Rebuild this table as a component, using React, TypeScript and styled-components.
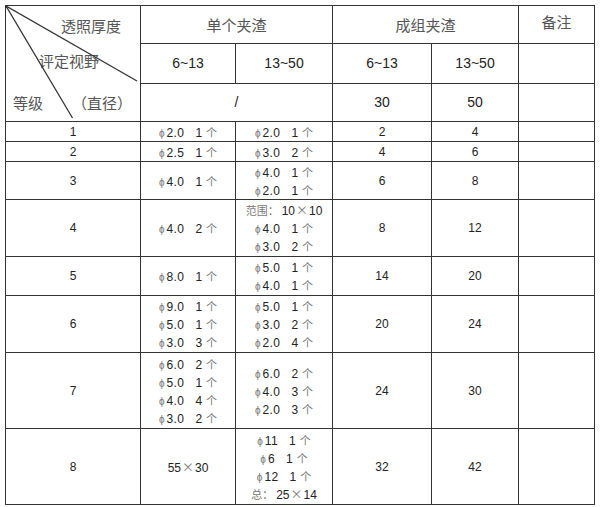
import React from "react";
import styled, { createGlobalStyle } from "styled-components";

const Global = createGlobalStyle`
  html, body { margin: 0; padding: 0; background: #fff; }
  body { font-family: "Liberation Sans", Arial, "Noto Sans CJK SC", sans-serif; }
`;

const Page = styled.div`
  padding: 5px 0 0 5px;
`;

const Table = styled.table`
  border-collapse: collapse;
  table-layout: fixed;
  width: 589px;
  border: 1px solid #333;
`;

const Row = styled.tr<{ $h: number }>`
  height: ${(p) => p.$h}px;
`;

const Cell = styled.td`
  border: 1px solid #333;
  padding: 0;
  text-align: center;
  vertical-align: middle;
  color: #222;
  font-size: 11px;
  line-height: 18px;
`;

const HeadCell = styled(Cell)<{ $cjk?: boolean; $lift?: number }>`
  font-size: ${(p) => (p.$cjk ? 15 : 14)}px;
  color: ${(p) => (p.$cjk ? "#555" : "#222")};
  font-family: ${(p) =>
    p.$cjk
      ? '"Noto Sans CJK SC", sans-serif'
      : '"Liberation Sans", Arial, sans-serif'};
  padding-bottom: ${(p) => p.$lift ?? 0}px;
  line-height: 20px;
`;

const CornerCell = styled.td`
  border: 1px solid #333;
  padding: 0;
  position: relative;
`;

const Diagonals = styled.svg`
  position: absolute;
  left: 0;
  top: 0;
  width: 100%;
  height: 100%;
  pointer-events: none;
`;

const CornerGrid = styled.div`
  display: grid;
  grid-template-rows: 38px 39px 38px;
  height: 115px;
  font-family: "Noto Sans CJK SC", sans-serif;
  font-size: 15px;
  color: #555;
`;

const CornerLine = styled.div<{ $pad: number; $dy?: number }>`
  display: flex;
  align-items: center;
  padding-left: ${(p) => p.$pad}px;
  padding-bottom: ${(p) => p.$dy ?? 0}px;
  gap: 29px;
`;

const Line = styled.div`
  display: block;
  white-space: nowrap;
  line-height: 18px;
  height: 18px;
`;

const Phi = styled.span`
  font-size: 10px;
  color: #777;
  margin-right: 2px;
`;

const Val = styled.span`
  font-size: 12px;
  letter-spacing: 0.4px;
  color: #222;
`;

const Count = styled.span`
  font-size: 12px;
  color: #222;
  margin-left: 11px;
`;

const Unit = styled.span`
  font-family: "Noto Sans CJK SC", sans-serif;
  font-size: 11px;
  color: #777;
  margin-left: 4px;
`;

const Cjk = styled.span`
  font-family: "Noto Sans CJK SC", sans-serif;
  font-size: 11px;
  color: #777;
`;

const Times = styled.span`
  font-family: "Noto Sans CJK SC", sans-serif;
  font-size: 12px;
  color: #777;
  margin: 0 1px;
`;

const Num = styled.span<{ $gap?: number }>`
  font-size: 12px;
  color: #222;
  margin-left: ${(p) => p.$gap ?? 0}px;
`;

type Item =
  | { kind: "phi"; v: string; n: string }
  | { kind: "range"; label: string; a: string; b: string }
  | { kind: "text"; a: string; b: string };

const phi = (v: string, n: string): Item => ({ kind: "phi", v, n });

const Entry: React.FC<{ item: Item }> = ({ item }) => {
  if (item.kind === "phi") {
    return (
      <Line>
        <Phi>ϕ</Phi>
        <Val>{item.v}</Val>
        <Count>{item.n}</Count>
        <Unit>个</Unit>
      </Line>
    );
  }
  if (item.kind === "range") {
    return (
      <Line>
        <Cjk>{item.label}：</Cjk>
        <Num $gap={3}>{item.a}</Num>
        <Times>×</Times>
        <Num>{item.b}</Num>
      </Line>
    );
  }
  return (
    <Line>
      <Num>{item.a}</Num>
      <Times>×</Times>
      <Num>{item.b}</Num>
    </Line>
  );
};

type DataRow = {
  grade: string;
  h: number;
  single1: Item[];
  single2: Item[];
  g1: string;
  g2: string;
};

const rows: DataRow[] = [
  { grade: "1", h: 20, single1: [phi("2.0", "1")], single2: [phi("2.0", "1")], g1: "2", g2: "4" },
  { grade: "2", h: 20, single1: [phi("2.5", "1")], single2: [phi("3.0", "2")], g1: "4", g2: "6" },
  {
    grade: "3",
    h: 38,
    single1: [phi("4.0", "1")],
    single2: [phi("4.0", "1"), phi("2.0", "1")],
    g1: "6",
    g2: "8",
  },
  {
    grade: "4",
    h: 57,
    single1: [phi("4.0", "2")],
    single2: [
      { kind: "range", label: "范围", a: "10", b: "10" },
      phi("4.0", "1"),
      phi("3.0", "2"),
    ],
    g1: "8",
    g2: "12",
  },
  {
    grade: "5",
    h: 39,
    single1: [phi("8.0", "1")],
    single2: [phi("5.0", "1"), phi("4.0", "1")],
    g1: "14",
    g2: "20",
  },
  {
    grade: "6",
    h: 57,
    single1: [phi("9.0", "1"), phi("5.0", "1"), phi("3.0", "3")],
    single2: [phi("5.0", "1"), phi("3.0", "2"), phi("2.0", "4")],
    g1: "20",
    g2: "24",
  },
  {
    grade: "7",
    h: 76,
    single1: [phi("6.0", "2"), phi("5.0", "1"), phi("4.0", "4"), phi("3.0", "2")],
    single2: [phi("6.0", "2"), phi("4.0", "3"), phi("2.0", "3")],
    g1: "24",
    g2: "30",
  },
  {
    grade: "8",
    h: 76,
    single1: [{ kind: "text", a: "55", b: "30" }],
    single2: [
      phi("11", "1"),
      phi("6", "1"),
      phi("12", "1"),
      { kind: "range", label: "总", a: "25", b: "14" },
    ],
    g1: "32",
    g2: "42",
  },
];

const NumCell = styled(Cell)`
  font-size: 12px;
`;

export default function App() {
  return (
    <Page>
      <Global />
      <Table>
        <colgroup>
          <col style={{ width: 135 }} />
          <col style={{ width: 95 }} />
          <col style={{ width: 97 }} />
          <col style={{ width: 99 }} />
          <col style={{ width: 87 }} />
          <col style={{ width: 76 }} />
        </colgroup>
        <tbody>
          <Row $h={38}>
            <CornerCell rowSpan={3}>
              <Diagonals viewBox="0 0 135 115" preserveAspectRatio="none">
                <line x1="0" y1="0" x2="132" y2="75" stroke="#333" strokeWidth="1.3" />
                <line x1="0" y1="0" x2="67" y2="112" stroke="#333" strokeWidth="1.3" />
              </Diagonals>
              <CornerGrid>
                <CornerLine $pad={55}>透照厚度</CornerLine>
                <CornerLine $pad={33} $dy={6}>评定视野</CornerLine>
                <CornerLine $pad={7}>
                  <span>等级</span>
                  <span>（直径）</span>
                </CornerLine>
              </CornerGrid>
            </CornerCell>
            <HeadCell $cjk colSpan={2}>单个夹渣</HeadCell>
            <HeadCell $cjk colSpan={2}>成组夹渣</HeadCell>
            <HeadCell $cjk $lift={6}>备注</HeadCell>
          </Row>
          <Row $h={39}>
            <HeadCell>6~13</HeadCell>
            <HeadCell>13~50</HeadCell>
            <HeadCell>6~13</HeadCell>
            <HeadCell>13~50</HeadCell>
            <HeadCell />
          </Row>
          <Row $h={38}>
            <HeadCell colSpan={2}>/</HeadCell>
            <HeadCell>30</HeadCell>
            <HeadCell>50</HeadCell>
            <HeadCell />
          </Row>
          {rows.map((r) => (
            <Row key={r.grade} $h={r.h}>
              <NumCell>{r.grade}</NumCell>
              <Cell>
                {r.single1.map((it, i) => (
                  <Entry key={i} item={it} />
                ))}
              </Cell>
              <Cell>
                {r.single2.map((it, i) => (
                  <Entry key={i} item={it} />
                ))}
              </Cell>
              <NumCell>{r.g1}</NumCell>
              <NumCell>{r.g2}</NumCell>
              <Cell />
            </Row>
          ))}
        </tbody>
      </Table>
    </Page>
  );
}
